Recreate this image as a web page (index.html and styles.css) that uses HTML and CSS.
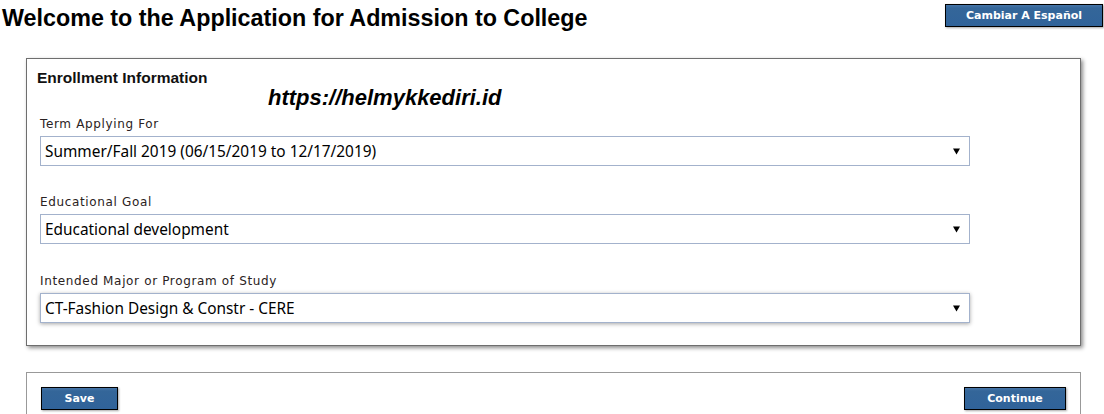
FILE: index.html
```html
<!DOCTYPE html>
<html lang="en">
<head>
<meta charset="utf-8">
<title>Application for Admission</title>
<link rel="stylesheet" href="styles.css">
</head>
<body>
<header class="page-header">
  <h1 class="page-title">Welcome to the Application for Admission to College</h1>
  <button class="btn btn-lang" type="button">Cambiar A Español</button>
</header>

<section class="panel panel-form">
  <h2 class="panel-title">Enrollment Information</h2>
  <div class="watermark">https://helmykkediri.id</div>

  <div class="field field-term">
    <label class="field-label">Term Applying For</label>
    <div class="select">
      <span class="select-value">Summer/Fall 2019 (06/15/2019 to 12/17/2019)</span>
      <svg class="select-arrow" width="7" height="7" viewBox="0 0 7 7"><polygon points="0,0.5 7,0.5 3.5,6.5" fill="#000"/></svg>
    </div>
  </div>

  <div class="field field-goal">
    <label class="field-label">Educational Goal</label>
    <div class="select">
      <span class="select-value">Educational development</span>
      <svg class="select-arrow" width="7" height="7" viewBox="0 0 7 7"><polygon points="0,0.5 7,0.5 3.5,6.5" fill="#000"/></svg>
    </div>
  </div>

  <div class="field field-major">
    <label class="field-label">Intended Major or Program of Study</label>
    <div class="select select-focus">
      <span class="select-value">CT-Fashion Design &amp; Constr - CERE</span>
      <svg class="select-arrow" width="7" height="7" viewBox="0 0 7 7"><polygon points="0,0.5 7,0.5 3.5,6.5" fill="#000"/></svg>
    </div>
  </div>
</section>

<section class="panel panel-actions">
  <button class="btn btn-save" type="button">Save</button>
  <button class="btn btn-continue" type="button">Continue</button>
</section>
</body>
</html>
```

FILE: styles.css
```css
* { box-sizing: border-box; }

html, body {
  margin: 0;
  padding: 0;
  background: #fff;
}

body {
  font-family: "Liberation Sans", Arial, sans-serif;
  color: #000;
  overflow: hidden;
}

.page-header {
  display: flex;
  justify-content: space-between;
  align-items: flex-start;
  padding: 4px 1px 0 2px;
}

.page-title {
  margin: 1px 0 0 0;
  font-family: "Liberation Sans", Arial, sans-serif;
  font-size: 23.3px;
  line-height: 26px;
  font-weight: bold;
  color: #000;
}

.btn {
  font-family: "DejaVu Sans", Verdana, sans-serif;
  font-weight: bold;
  font-size: 11px;
  color: #fff;
  background: linear-gradient(#4675a8 0, #346699 3px, #30639a 100%);
  border: 1px solid #000;
  box-shadow: 1px 1px 2px rgba(0, 0, 0, 0.35);
  height: 23px;
  padding: 0;
  line-height: 20px;
  cursor: pointer;
}

.btn-lang {
  width: 158px;
}

.panel {
  margin-left: 26px;
  width: 1055px;
  border: 1px solid #6e6e6e;
  background: #fff;
}

.panel-form {
  position: relative;
  margin-top: 27px;
  padding: 11px 10px 22px 10px;
  box-shadow: 2px 2px 4px rgba(0, 0, 0, 0.45);
}

.panel-title {
  margin: 0;
  font-family: "Liberation Sans", Arial, sans-serif;
  font-size: 15.5px;
  line-height: 16px;
  font-weight: bold;
  color: #111;
}

.watermark {
  position: absolute;
  left: 241px;
  top: 25px;
  font-family: "Liberation Sans", Arial, sans-serif;
  font-size: 22px;
  font-weight: bold;
  font-style: italic;
  color: #000;
  line-height: 28px;
}

.field {
  margin-left: 3px;
}

.field-term { margin-top: 30px; }
.field-goal { margin-top: 28px; }
.field-major { margin-top: 29px; }

.field-label {
  display: block;
  font-family: "DejaVu Sans", Verdana, sans-serif;
  font-size: 12px;
  letter-spacing: 0.65px;
  line-height: 16px;
  color: #2a2222;
  margin-bottom: 4px;
}

.select {
  display: flex;
  align-items: center;
  justify-content: space-between;
  width: 930px;
  height: 30px;
  border: 1px solid #a3b2cc;
  background: #fff;
  padding: 0 9px 0 4px;
}

.select-focus {
  box-shadow: 0 1px 4px rgba(0, 0, 0, 0.35);
}

.select-value {
  font-family: "Noto Sans", "Open Sans", sans-serif;
  font-size: 15.4px;
  color: #000;
  white-space: nowrap;
}

.select-arrow {
  display: block;
  flex: none;
}

.panel-actions {
  margin-top: 26px;
  height: 60px;
  border-color: #999;
  display: flex;
  justify-content: space-between;
  align-items: flex-start;
  padding: 14px 14px 0 14px;
}

.btn-save {
  width: 77px;
}

.btn-continue {
  width: 102px;
}
```
